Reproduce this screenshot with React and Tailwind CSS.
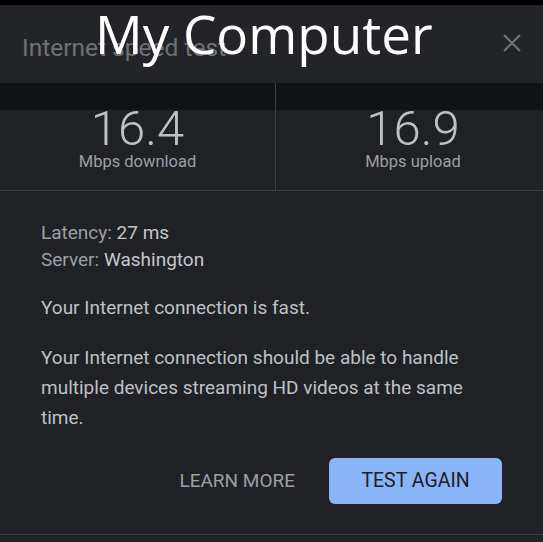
import React from "react";

export default function App() {
  return (
    <div className="w-[543px] h-[542px] overflow-hidden bg-[#202124] relative" style={{ fontFamily: "Roboto, 'Liberation Sans', sans-serif" }}>
      <div className="w-[550px] flex flex-col">
        <div className="h-[5px] bg-black" />
        <div className="h-[78px] bg-[#232427] flex items-center justify-between pl-[22px] pr-[19px]">
          <span className="text-[24.5px] text-[#6f7276] leading-none mt-[8px]">Internet speed test</span>
          <svg width="20" height="20" viewBox="0 0 20 20" className="mr-[9px] -mt-[2px]">
            <path d="M2 2 L18 18 M18 2 L2 18" stroke="#6f7276" strokeWidth="2.2" fill="none" />
          </svg>
        </div>
        <div className="grid grid-cols-2 border-b border-[#3c4043]">
          <div className="flex flex-col">
            <div className="h-[27px] bg-[#111214]" />
            <div className="h-[80px] flex flex-col items-center">
              <div className="text-[49px] leading-[44px] text-[#bdc1c6] font-light -mt-[3px]">16.4</div>
              <div className="text-[16.5px] leading-[20px] text-[#9aa0a6] mt-[1px]">Mbps download</div>
            </div>
          </div>
          <div className="flex flex-col border-l border-[#3c4043]">
            <div className="h-[27px] bg-[#111214]" />
            <div className="h-[80px] flex flex-col items-center">
              <div className="text-[49px] leading-[44px] text-[#bdc1c6] font-light -mt-[3px]">16.9</div>
              <div className="text-[16.5px] leading-[20px] text-[#9aa0a6] mt-[1px]">Mbps upload</div>
            </div>
          </div>
        </div>
        <div className="px-[41px] pt-[28px] text-[19px] text-[#bdc1c6]">
          <div className="leading-[27px]"><span className="text-[#9aa0a6]">Latency:</span> <span className="text-[#c4c7cb]">27 ms</span></div>
          <div className="leading-[27px]"><span className="text-[#9aa0a6]">Server:</span> <span className="text-[#c4c7cb]">Washington</span></div>
          <p className="leading-[27px] mt-[21px]">Your Internet connection is fast.</p>
          <p className="leading-[30px] mt-[22px]">Your Internet connection should be able to handle multiple devices streaming HD videos at the same time.</p>
          <div className="flex justify-end items-center gap-[34px] mt-[25px] pr-[7px]">
            <button className="text-[19px] text-[#9aa0a6]">LEARN MORE</button>
            <button className="h-[46px] w-[173px] rounded-[6px] bg-[#8ab4f8] text-[19.5px] text-[#202124]">TEST AGAIN</button>
          </div>
        </div>
        <div className="mt-[30px] border-t border-[#3c4043]" />
      </div>
      <div className="absolute left-[95px] top-[1px] text-white text-[53px] leading-[66px]" style={{ fontFamily: "'Open Sans', 'Noto Sans', sans-serif" }}>My Computer</div>
    </div>
  );
}
